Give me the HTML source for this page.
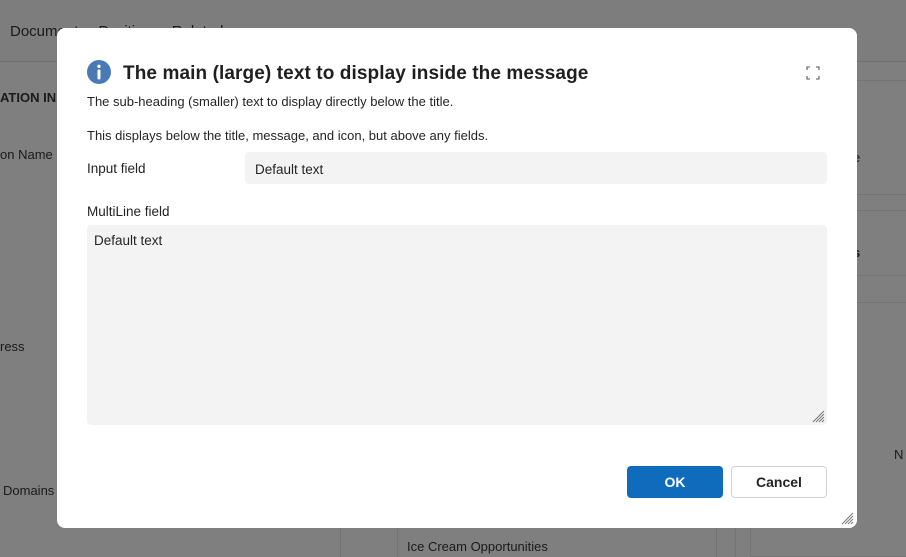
<!DOCTYPE html>
<html><head><style>
*{box-sizing:border-box;margin:0;padding:0}
body{width:906px;height:557px;overflow:hidden;background:#7f7f7f;font-family:"Liberation Sans",sans-serif;position:relative;color:#242424}
.bg{position:absolute;color:#1a1a1a;font-size:14px}
.dlg{position:absolute;left:57px;top:28px;width:800px;height:500px;background:#fff;border-radius:8px}
.t{position:absolute;font-size:13.5px;color:#242424}
.inp{position:absolute;background:#f3f3f3;border-radius:4px;font-size:13.5px;color:#242424}
.btn{position:absolute;top:438px;width:96px;height:32px;border-radius:4px;font-size:14px;font-weight:bold;text-align:center;line-height:33px}
</style></head><body>
<div style="position:absolute;left:0;top:0;width:906px;height:62px;background:#7d7d7d;border-bottom:1px solid #707070"></div>
<div class="bg" style="left:10px;top:23px;font-size:15px">Documents &nbsp; Positions &nbsp; Related</div>
<div class="bg" style="left:0;top:90px;font-weight:bold;font-size:13px">ATION IN</div>
<div class="bg" style="left:0;top:147px;font-size:13px">on Name</div>
<div class="bg" style="left:0;top:339px;font-size:13px">ress</div>
<div class="bg" style="left:3px;top:483px;font-size:13px">Domains</div>
<div class="bg" style="left:853px;top:150px;font-size:13px">e</div>
<div class="bg" style="left:853px;top:245px;font-size:13px;font-weight:bold">s</div>
<div class="bg" style="left:894px;top:447px;font-size:13px">N</div>
<div style="position:absolute;left:750px;top:80px;width:156px;height:115px;border:1px solid #747474;border-right:none"></div>
<div style="position:absolute;left:750px;top:210px;width:156px;height:347px;border:1px solid #747474;border-right:none"></div>
<div style="position:absolute;left:750px;top:275px;width:156px;height:28px;border-top:1px solid #747474;border-bottom:1px solid #747474"></div>
<div style="position:absolute;left:340px;top:528px;width:1px;height:29px;background:#747474"></div>
<div style="position:absolute;left:397px;top:528px;width:320px;height:29px;border-left:1px solid #747474;border-right:1px solid #747474"></div>
<div class="bg" style="left:407px;top:539px;font-size:13px">Ice Cream Opportunities</div>
<div style="position:absolute;left:735px;top:528px;width:1px;height:29px;background:#747474"></div>

<div class="dlg">
<svg style="position:absolute;left:30px;top:32px" width="24" height="24" viewBox="0 0 24 24"><circle cx="12" cy="12" r="12" fill="#4a7ab4"/><circle cx="12" cy="6.3" r="1.7" fill="#fff"/><rect x="10.5" y="9.5" width="3" height="10" rx="1.2" fill="#fff"/></svg>
<div class="t" style="left:66px;top:35px;font-size:19px;font-weight:bold;color:#1f1f1f;letter-spacing:0.1px">The main (large) text to display inside the message</div>
<svg style="position:absolute;left:749px;top:38px" width="14" height="14" viewBox="0 0 14 14" fill="none" stroke="#555" stroke-width="1.1"><path d="M1 4V1H4M10 1H13V4M13 10V13H10M4 13H1V10"/></svg>
<div class="t" style="left:30px;top:66px;font-size:13px">The sub-heading (smaller) text to display directly below the title.</div>
<div class="t" style="left:30px;top:100px;font-size:13px">This displays below the title, message, and icon, but above any fields.</div>
<div class="t" style="left:30px;top:133px">Input field</div>
<div class="inp" style="left:188px;top:124px;width:582px;height:32px;padding:10px 10px">Default text</div>
<div class="t" style="left:30px;top:176px">MultiLine field</div>
<div class="inp" style="left:30px;top:197px;width:740px;height:200px;padding:8px 7px">Default text</div>
<svg style="position:absolute;left:755px;top:382px" width="13" height="13" viewBox="0 0 13 13" stroke="#777" stroke-width="1"><path d="M12 1L1 12M12 4L4 12M12 7L7 12M12 10L10 12"/></svg>
<div class="btn" style="left:570px;background:#0f6cbd;color:#fff">OK</div>
<div class="btn" style="left:674px;background:#fff;border:1px solid #d1d1d1;color:#242424;line-height:31px">Cancel</div>
<svg style="position:absolute;left:784px;top:484px" width="13" height="13" viewBox="0 0 13 13" stroke="#777" stroke-width="1"><path d="M12 1L1 12M12 4L4 12M12 7L7 12M12 10L10 12"/></svg>
</div>
</body></html>
